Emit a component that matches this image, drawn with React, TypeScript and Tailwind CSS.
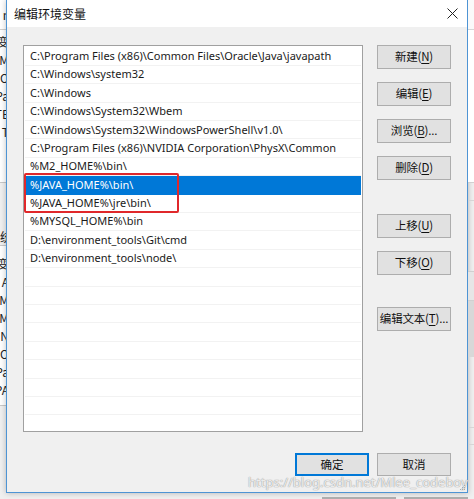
import React from "react";

const rows = [
  "C:\\Program Files (x86)\\Common Files\\Oracle\\Java\\javapath",
  "C:\\Windows\\system32",
  "C:\\Windows",
  "C:\\Windows\\System32\\Wbem",
  "C:\\Windows\\System32\\WindowsPowerShell\\v1.0\\",
  "C:\\Program Files (x86)\\NVIDIA Corporation\\PhysX\\Common",
  "%M2_HOME%\\bin\\",
  "%JAVA_HOME%\\bin\\",
  "%JAVA_HOME%\\jre\\bin\\",
  "%MYSQL_HOME%\\bin",
  "D:\\environment_tools\\Git\\cmd",
  "D:\\environment_tools\\node\\",
];

const cjk = { fontFamily: '"Noto Sans CJK SC", "Noto Sans", sans-serif' };
const latin = { fontFamily: '"Noto Sans", "Noto Sans CJK SC", sans-serif' };

function Btn({ label, k, tail = "", className = "" }: { label: string; k: string; tail?: string; className?: string }) {
  return (
    <div
      className={`h-[24px] w-[74px] flex items-center justify-center whitespace-nowrap bg-[#e1e1e1] border border-[#adadad] text-[11.5px] tracking-[-0.2px] text-[#111] ${className}`}
      style={cjk}
    >
      {label}(<span className="underline underline-offset-2">{k}</span>){tail}
    </div>
  );
}

const leftTop = ["变", "M", "O", "Pa", "TE", "T", "", ""];
const leftBottom = ["变", "A", "M", "M", "N", "O", "Pa", "PA"];

function Frag({ t }: { t: string }) {
  return (
    <div className="h-[18px] flex justify-end items-center overflow-hidden whitespace-nowrap text-[12px] text-[#222]" style={cjk}>
      <span className="mr-[-3px]">{t}</span>
    </div>
  );
}

export default function App() {
  return (
    <div className="w-[474px] h-[499px] overflow-hidden bg-[#f0f0f0] flex relative">
      {/* background window, left edge */}
      <div className="w-[6px] flex flex-col overflow-hidden">
        <div className="h-[30px] bg-white flex justify-end items-center text-[12px] text-[#222] border-b border-[#d0d0d0]" style={cjk}>
          <span className="mr-[-4px]">n</span>
        </div>
        <div className="h-[153px] bg-white flex flex-col pt-[3px] border-b border-[#c8c8c8]">
          {leftTop.map((t, i) => (
            <Frag key={i} t={t} />
          ))}
        </div>
        <div className="h-[63px] flex flex-col justify-end">
          <div className="h-[18px] flex justify-end items-center text-[12px] text-[#222] border-b border-[#c8c8c8]" style={cjk}>
            <span className="mr-[-6px]">统</span>
          </div>
        </div>
        <div className="h-[160px] bg-white flex flex-col pt-[9px] border-b border-[#c8c8c8]">
          {leftBottom.map((t, i) => (
            <Frag key={i} t={t} />
          ))}
        </div>
      </div>

      {/* dialog column */}
      <div className="w-[462px] flex flex-col">
        <div className="h-[493px] flex flex-col border-x border-b border-[#4e94d4] bg-[#f0f0f0] shadow-[0_0_6px_rgba(0,0,0,0.25)]">
          <div className="h-[27px] bg-white flex items-center justify-between pl-[7px] pr-[8px]">
            <span className="text-[12px] text-[#111]" style={cjk}>编辑环境变量</span>
            <svg width="11" height="11" viewBox="0 0 11 11" className="mr-[1px]">
              <path d="M0.5 0.5 L10.5 10.5 M10.5 0.5 L0.5 10.5" stroke="#222" strokeWidth="1" />
            </svg>
          </div>
          <div className="flex-1 flex flex-col px-[16px] pt-[18px]">
            <div className="flex gap-[14px]">
              <div className="w-[343px] h-[387px] border border-[#a0a0a0] bg-white pt-[1.5px] overflow-hidden">
                {Array.from({ length: 21 }).map((_, i) => {
                  const sel = i === 7;
                  return (
                    <div
                      key={i}
                      className={`h-[18.4px] mx-[1px] flex items-center pl-[5px] text-[11px] whitespace-nowrap border-b ${
                        sel ? "bg-[#0078d7] text-white border-[#0078d7]" : "text-[#1a1a1a] border-[#f2f2f2]"
                      }`}
                      style={latin}
                    >
                      {rows[i] ?? ""}
                    </div>
                  );
                })}
              </div>
              <div className="w-[74px] flex flex-col">
                <Btn label="新建" k="N" />
                <Btn label="编辑" k="E" className="mt-[13px]" />
                <Btn label="浏览" k="B" tail="..." className="mt-[13px]" />
                <Btn label="删除" k="D" className="mt-[13px]" />
                <Btn label="上移" k="U" className="mt-[34px]" />
                <Btn label="下移" k="O" className="mt-[13px]" />
                <Btn label="编辑文本" k="T" tail="..." className="mt-[32px]" />
              </div>
            </div>
            <div className="flex justify-end gap-[8px] mt-[21px]">
              <div className="h-[23px] w-[74px] flex items-center justify-center bg-[#e1e1e1] border-2 border-[#0078d7] text-[11.5px] text-[#111]" style={cjk}>
                确定
              </div>
              <div className="h-[23px] w-[74px] flex items-center justify-center bg-[#e1e1e1] border border-[#adadad] text-[11.5px] text-[#111]" style={cjk}>
                取消
              </div>
            </div>
          </div>
        </div>
        <div className="flex-1 flex gap-[8px] pl-[316px]">
          <div className="w-[75px] mt-[4px] border border-[#adadad] bg-[#e1e1e1]" />
          <div className="w-[64px] mt-[4px] border border-[#adadad] bg-[#e1e1e1]" />
        </div>
      </div>

      {/* background window, right edge */}
      <div className="flex-1 flex flex-col">
        <div className="h-[30px] bg-[#fafafa] border-b border-[#d6d6d6]" />
        <div className="h-[153px] bg-white border-b border-[#d0d0d0]" />
        <div className="h-[18px] border-b border-[#d6d6d6]" />
        <div className="h-[70px]" />
        <div className="h-[30px] bg-[#e6e6e6] border-y border-[#d0d0d0]" />
        <div className="h-[56px] bg-[#d8d8d8]" />
        <div className="h-[70px]" />
        <div className="h-[18px] border-y border-[#d6d6d6]" />
      </div>

      {/* annotation + watermark overlays */}
      <div className="absolute left-[24px] top-[173px] w-[155px] h-[40px] border-2 border-[#e0282b] rounded-[2px]" />
      <div
        className="absolute left-[248px] top-[473px] text-[13px] text-white/80 whitespace-nowrap [text-shadow:0_0_1px_#9a9a9a,0_0_1px_#9a9a9a]"
        style={latin}
      >
        https://blog.csdn.net/Mlee_codeboy
      </div>
      <svg className="absolute left-[460px] top-[485px]" width="6" height="6" viewBox="0 0 6 6">
        <rect x="4" y="0" width="1" height="1" fill="#aaa" />
        <rect x="2" y="2" width="1" height="1" fill="#aaa" />
        <rect x="4" y="2" width="1" height="1" fill="#aaa" />
        <rect x="0" y="4" width="1" height="1" fill="#aaa" />
        <rect x="2" y="4" width="1" height="1" fill="#aaa" />
        <rect x="4" y="4" width="1" height="1" fill="#aaa" />
      </svg>
    </div>
  );
}
